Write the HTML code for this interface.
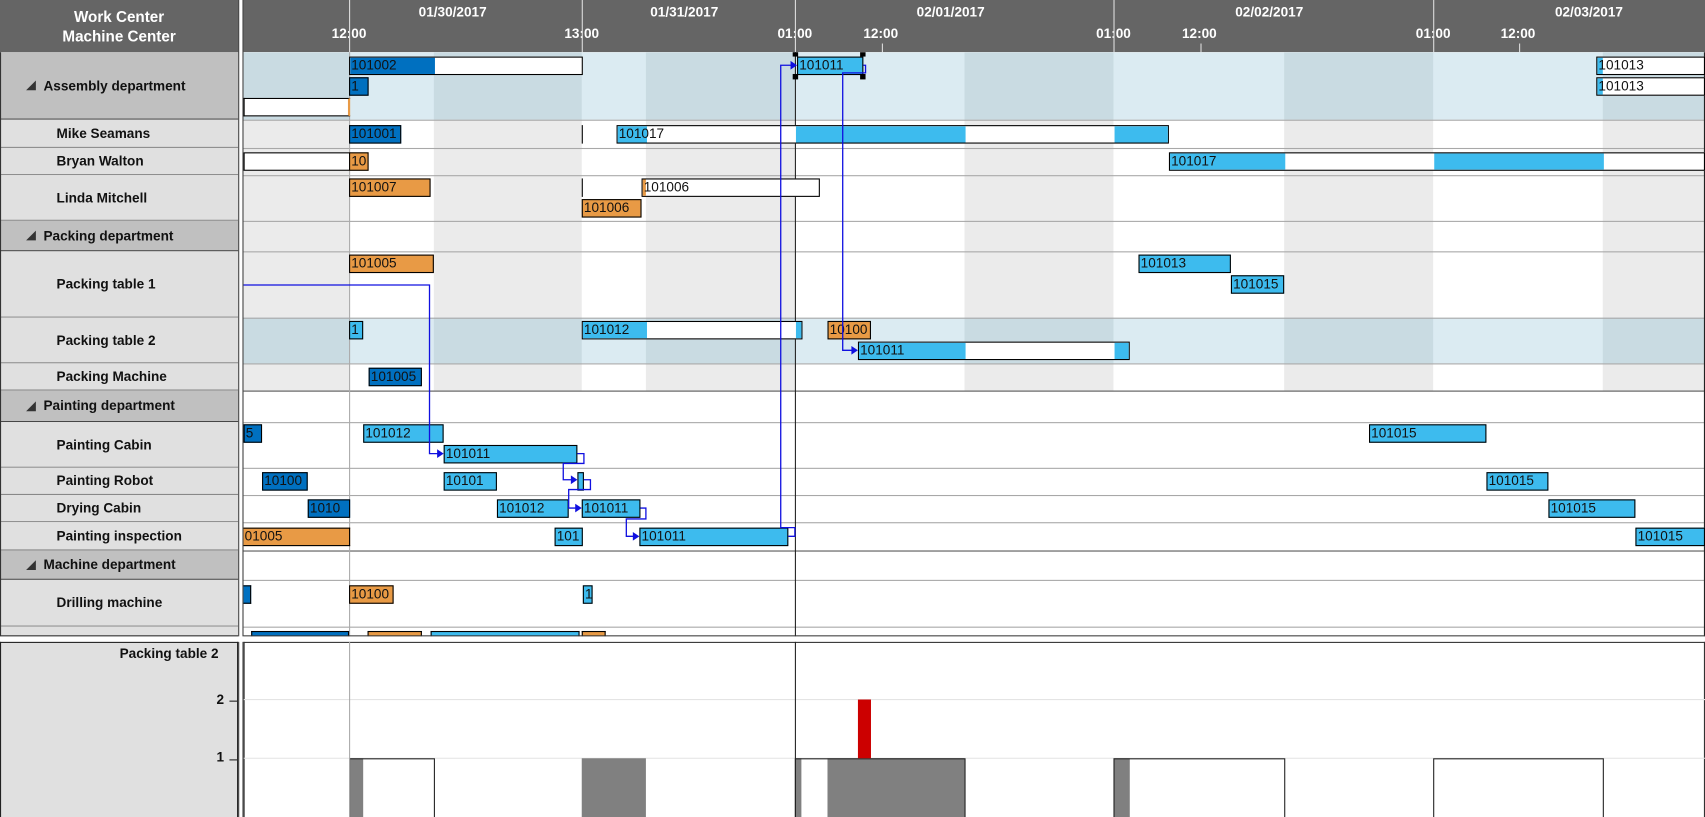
<!DOCTYPE html>
<html><head><meta charset="utf-8"><style>
*{margin:0;padding:0;box-sizing:border-box}
html,body{width:1705px;height:817px;overflow:hidden;background:#fff}
#w{position:absolute;left:0;top:0;width:1568px;height:751px;transform:scale(1.08737,1.0879);transform-origin:0 0;font-family:"Liberation Sans",sans-serif}
.a{position:absolute}
.hd{background:#656565;color:#fff;font-weight:bold}
.lb{position:absolute;left:0;width:219px;background:#e0e0e0;border-bottom:1px solid #888;font-weight:bold;font-size:12.5px;color:#111;display:flex;align-items:center;padding-left:52px}
.g{background:#c0c0c0;padding-left:24px;border-bottom:1px solid #444}
.g:before{content:"";width:0;height:0;border-left:9px solid transparent;border-bottom:9px solid #333;margin-right:7px}
.b{position:absolute;height:17px;border:1px solid #000;background:#fff;font-size:12.5px;line-height:15px;padding-left:1px;overflow:hidden;white-space:nowrap;color:#111}
.b span{position:relative}
.f{position:absolute;top:0;bottom:0}
.db{background:#0070c0}.lb2{background:#3dbbee}.or{background:#e89a45}
.hl{position:absolute;left:224px;width:1344px;height:1px;background:#a8a8a8}
.dk{background:#555}
</style></head><body><div id="w">
<!-- header -->
<div class="a hd" style="left:0;top:0;width:219px;height:48px;text-align:center;font-size:14px;line-height:18px;padding-top:6px">Work Center<br>Machine Center</div>
<div class="a" style="left:219px;top:0;width:5px;height:585px;background:#fff;border-left:1px solid #333;border-right:1px solid #333"></div>
<div class="a hd" style="left:224px;top:0;width:1344px;height:48px;font-size:12.5px">
<div class="a" style="left:161px;top:4px">01/30/2017</div>
<div class="a" style="left:374px;top:4px">01/31/2017</div>
<div class="a" style="left:619px;top:4px">02/01/2017</div>
<div class="a" style="left:912px;top:4px">02/02/2017</div>
<div class="a" style="left:1206px;top:4px">02/03/2017</div>
<div class="a" style="left:81px;top:24px">12:00</div>
<div class="a" style="left:295px;top:24px">13:00</div>
<div class="a" style="left:491px;top:24px">01:00</div>
<div class="a" style="left:570px;top:24px">12:00</div>
<div class="a" style="left:784px;top:24px">01:00</div>
<div class="a" style="left:863px;top:24px">12:00</div>
<div class="a" style="left:1078px;top:24px">01:00</div>
<div class="a" style="left:1156px;top:24px">12:00</div>
<div class="a" style="left:97px;top:0;width:1px;height:48px;background:#ddd"></div>
<div class="a" style="left:311px;top:0;width:1px;height:48px;background:#ddd"></div>
<div class="a" style="left:507px;top:0;width:1px;height:48px;background:#ddd"></div>
<div class="a" style="left:800px;top:0;width:1px;height:48px;background:#ddd"></div>
<div class="a" style="left:1094px;top:0;width:1px;height:48px;background:#ddd"></div>
<div class="a" style="left:587px;top:40px;width:1px;height:8px;background:#ddd"></div>
<div class="a" style="left:880px;top:40px;width:1px;height:8px;background:#ddd"></div>
<div class="a" style="left:1173px;top:40px;width:1px;height:8px;background:#ddd"></div>
</div>
<!-- chart backgrounds -->
<div class="a" style="left:224px;top:48px;width:1344px;height:537px;background:#fff"></div>
<svg class="a" style="left:224px;top:48px" width="1344" height="311">
<g fill="#ebebeb"><rect x="0" y="62" width="97" height="249"/><rect x="175" y="62" width="136" height="249"/><rect x="370" y="62" width="137" height="249"/><rect x="663" y="62" width="137" height="249"/><rect x="957" y="62" width="137" height="249"/><rect x="1250" y="62" width="94" height="249"/></g>
<g fill="#dbebf2"><rect x="0" y="0" width="1344" height="62"/><rect x="0" y="244" width="1344" height="42"/></g>
<g fill="#c9dbe2"><rect x="0" y="0" width="97" height="62"/><rect x="175" y="0" width="136" height="62"/><rect x="370" y="0" width="137" height="62"/><rect x="663" y="0" width="137" height="62"/><rect x="957" y="0" width="137" height="62"/><rect x="1250" y="0" width="94" height="62"/>
<rect x="0" y="244" width="97" height="42"/><rect x="175" y="244" width="136" height="42"/><rect x="370" y="244" width="137" height="42"/><rect x="663" y="244" width="137" height="42"/><rect x="957" y="244" width="137" height="42"/><rect x="1250" y="244" width="94" height="42"/></g>
</svg>
<!-- left labels -->
<div class="lb g" style="top:48px;height:62px">Assembly department</div>
<div class="lb" style="top:110px;height:26px">Mike Seamans</div>
<div class="lb" style="top:136px;height:25px">Bryan Walton</div>
<div class="lb" style="top:161px;height:42px">Linda Mitchell</div>
<div class="lb g" style="top:203px;height:28px">Packing department</div>
<div class="lb" style="top:231px;height:61px">Packing table 1</div>
<div class="lb" style="top:292px;height:42px">Packing table 2</div>
<div class="lb" style="top:334px;height:25px">Packing Machine</div>
<div class="lb g" style="top:359px;height:29px">Painting department</div>
<div class="lb" style="top:388px;height:42px">Painting Cabin</div>
<div class="lb" style="top:430px;height:25px">Painting Robot</div>
<div class="lb" style="top:455px;height:25px">Drying Cabin</div>
<div class="lb" style="top:480px;height:26px">Painting inspection</div>
<div class="lb g" style="top:506px;height:27px">Machine department</div>
<div class="lb" style="top:533px;height:43px">Drilling machine</div>
<div class="lb" style="top:576px;height:9px;border-bottom:1px solid #222"></div>
<div class="a" style="left:0;top:48px;width:1px;height:537px;background:#333"></div>
<!-- row lines -->
<div class="hl" style="top:110px"></div><div class="hl" style="top:136px"></div><div class="hl" style="top:161px"></div><div class="hl" style="top:203px"></div><div class="hl" style="top:231px"></div><div class="hl" style="top:292px"></div><div class="hl" style="top:334px"></div><div class="hl dk" style="top:359px"></div><div class="hl" style="top:388px"></div><div class="hl" style="top:430px"></div><div class="hl" style="top:455px"></div><div class="hl" style="top:480px"></div><div class="hl dk" style="top:506px"></div><div class="hl" style="top:533px"></div><div class="hl" style="top:576px"></div>
<div class="a" style="left:321px;top:48px;width:1px;height:703px;background:#aaa"></div>
<div class="a" style="left:731px;top:48px;width:1px;height:703px;background:#222"></div>
<div class="a" style="left:1567px;top:48px;width:1px;height:537px;background:#222"></div>
<!-- bars -->
<div class="b" style="left:321px;top:52px;width:215px"><div class="f db" style="left:0;width:78px"></div><span>101002</span></div>
<div class="b db" style="left:321px;top:71px;width:18px">1</div>
<div class="b" style="left:224px;top:90px;width:98px;border-right:2px solid #e89a45"></div>
<div class="b lb2" style="left:733px;top:52px;width:61px">101011</div>
<div class="a" style="left:729px;top:48px;width:5px;height:4px;background:#000"></div><div class="a" style="left:729px;top:68px;width:5px;height:5px;background:#000"></div><div class="a" style="left:791px;top:48px;width:5px;height:4px;background:#000"></div><div class="a" style="left:791px;top:68px;width:5px;height:5px;background:#000"></div>
<div class="b" style="left:1468px;top:52px;width:100px"><div class="f lb2" style="left:0;width:5px"></div><span>101013</span></div>
<div class="b" style="left:1468px;top:71px;width:100px"><div class="f lb2" style="left:0;width:5px"></div><span>101013</span></div>

<div class="b db" style="left:321px;top:115px;width:48px">101001</div>
<div class="a" style="left:535px;top:115px;width:1px;height:17px;background:#000"></div>
<div class="b" style="left:567px;top:115px;width:508px"><div class="f lb2" style="left:0;width:27px"></div><div class="f lb2" style="left:164px;width:156px"></div><div class="f lb2" style="left:457px;width:51px"></div><span>101017</span></div>

<div class="b" style="left:224px;top:140px;width:98px"></div>
<div class="b or" style="left:321px;top:140px;width:18px">10</div>
<div class="b" style="left:1075px;top:140px;width:493px"><div class="f lb2" style="left:0;width:106px"></div><div class="f lb2" style="left:243px;width:156px"></div><span>101017</span></div>

<div class="b or" style="left:321px;top:164px;width:75px">101007</div>
<div class="a" style="left:535px;top:164px;width:1px;height:17px;background:#000"></div>
<div class="b" style="left:590px;top:164px;width:164px"><div class="f or" style="left:0;width:3px"></div><span>101006</span></div>
<div class="b or" style="left:535px;top:183px;width:55px">101006</div>

<div class="b or" style="left:321px;top:234px;width:78px">101005</div>
<div class="b lb2" style="left:1047px;top:234px;width:85px">101013</div>
<div class="b lb2" style="left:1132px;top:253px;width:49px">101015</div>

<div class="b lb2" style="left:321px;top:295px;width:13px">1</div>
<div class="b" style="left:535px;top:295px;width:203px"><div class="f lb2" style="left:0;width:59px"></div><div class="f lb2" style="left:196px;width:7px"></div><span>101012</span></div>
<div class="b or" style="left:761px;top:295px;width:40px">10100</div>
<div class="b" style="left:789px;top:314px;width:250px"><div class="f lb2" style="left:0;width:98px"></div><div class="f lb2" style="left:235px;width:15px"></div><span>101011</span></div>

<div class="b db" style="left:339px;top:338px;width:49px">101005</div>

<div class="b db" style="left:224px;top:390px;width:17px">5</div>
<div class="b lb2" style="left:334px;top:390px;width:74px">101012</div>
<div class="b lb2" style="left:408px;top:409px;width:123px">101011</div>
<div class="b lb2" style="left:1259px;top:390px;width:108px">101015</div>

<div class="b db" style="left:241px;top:434px;width:42px">10100</div>
<div class="b lb2" style="left:408px;top:434px;width:49px">10101</div>
<div class="b lb2" style="left:531px;top:434px;width:6px"></div>
<div class="b lb2" style="left:1367px;top:434px;width:57px">101015</div>

<div class="b db" style="left:283px;top:459px;width:39px">1010</div>
<div class="b lb2" style="left:457px;top:459px;width:66px">101012</div>
<div class="b lb2" style="left:535px;top:459px;width:54px">101011</div>
<div class="b lb2" style="left:1424px;top:459px;width:80px">101015</div>

<div class="b or" style="left:224px;top:485px;width:98px;border-left:none">01005</div>
<div class="b lb2" style="left:510px;top:485px;width:26px">101</div>
<div class="b lb2" style="left:588px;top:485px;width:137px">101011</div>
<div class="b lb2" style="left:1504px;top:485px;width:64px">101015</div>

<div class="b db" style="left:224px;top:538px;width:7px;border-left:none"></div>
<div class="b or" style="left:321px;top:538px;width:41px">10100</div>
<div class="b lb2" style="left:536px;top:538px;width:9px">1</div>

<div class="b db" style="left:231px;top:580px;width:90px;height:5px;border-bottom:none"></div>
<div class="b or" style="left:338px;top:580px;width:50px;height:5px;border-bottom:none"></div>
<div class="b lb2" style="left:396px;top:580px;width:137px;height:5px;border-bottom:none"></div>
<div class="b or" style="left:535px;top:580px;width:22px;height:5px;border-bottom:none"></div>
<div class="a" style="left:224px;top:584px;width:1344px;height:1px;background:#333"></div>
<div class="a" style="left:0;top:585px;width:1568px;height:5px;background:#fff"></div>

<!-- links -->
<svg class="a" style="left:0;top:0" width="1568" height="585">
<g fill="none" stroke="#1010e0" stroke-width="1.2">
<path d="M224 262H395V417H404"/>
<path d="M531 417H537V426H518V441H527"/>
<path d="M537 441H543V450H523V467H531"/>
<path d="M589 467H594V477H576V493H584"/>
<path d="M725 493H731V485H718V60H729"/>
<path d="M794 60H796V67H775V322H785"/>
</g>
<g fill="#1010e0">
<path d="M408 417l-6-4v8z"/><path d="M531 441l-6-4v8z"/><path d="M535 467l-6-4v8z"/><path d="M588 493l-6-4v8z"/><path d="M733 60l-6-4v8z"/><path d="M789 322l-6-4v8z"/>
</g>
</svg>
<!-- histogram -->
<div class="a" style="left:0;top:590px;width:219px;height:161px;background:#e0e0e0;font-weight:bold;font-size:12.5px;color:#111;border:1px solid #222;border-bottom:none">
<div class="a" style="right:17px;top:3px">Packing table 2</div>
<div class="a" style="right:12px;top:45px">2</div>
<div class="a" style="right:12px;top:98px">1</div>
<div class="a" style="right:0;top:53px;width:7px;height:1px;background:#222"></div>
<div class="a" style="right:0;top:107px;width:7px;height:1px;background:#222"></div>
</div>
<div class="a" style="left:224px;top:590px;width:1344px;height:161px;border:1px solid #333;border-bottom:none;background:#fff"></div>
<svg class="a" style="left:224px;top:590px" width="1344" height="161">
<line x1="0" y1="53" x2="1344" y2="53" stroke="#e4e4e4"/>
<line x1="0" y1="107" x2="1344" y2="107" stroke="#e4e4e4"/>
<g fill="#808080"><rect x="97" y="107" width="13" height="54"/><rect x="311" y="107" width="59" height="54"/><rect x="507" y="107" width="6" height="54"/><rect x="537" y="107" width="126" height="54"/><rect x="800" y="107" width="15" height="54"/></g>
<g fill="none" stroke="#222"><rect x="97.5" y="107.5" width="78" height="54"/><rect x="507.5" y="107.5" width="156" height="54"/><rect x="800.5" y="107.5" width="157" height="54"/><rect x="1094.5" y="107.5" width="156" height="54"/></g>
<rect x="565" y="53" width="12" height="54" fill="#cc0000"/>
<line x1="97.5" y1="0" x2="97.5" y2="161" stroke="#aaa"/>
<line x1="507.5" y1="0" x2="507.5" y2="161" stroke="#222"/>
</svg>
<div class="a" style="left:219px;top:590px;width:5px;height:161px;border-left:1px solid #333;border-right:1px solid #333;background:#fff"></div>
</div></body></html>
